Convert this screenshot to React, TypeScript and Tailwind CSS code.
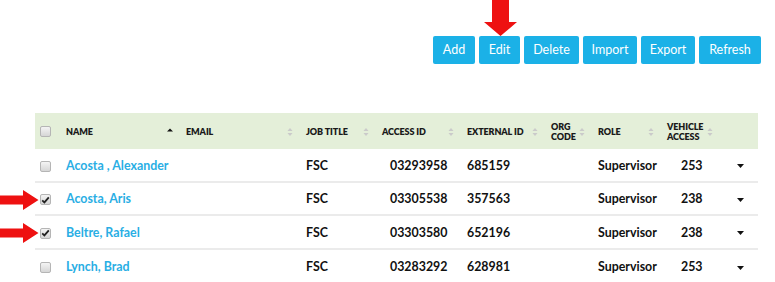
import React from "react";

const cols = "grid grid-cols-[25px_120px_120px_76px_85px_84px_47px_69px_59px_38px]";

const buttons = [
  { label: "Add", w: "w-[42px]" },
  { label: "Edit", w: "w-[41px]" },
  { label: "Delete", w: "w-[55px]" },
  { label: "Import", w: "w-[54px]" },
  { label: "Export", w: "w-[54px]" },
  { label: "Refresh", w: "w-[62px]" },
];

const rows = [
  { name: "Acosta , Alexander", title: "FSC", access: "03293958", ext: "685159", role: "Supervisor", veh: "253", checked: false, h: "h-[34px]" },
  { name: "Acosta, Aris", title: "FSC", access: "03305538", ext: "357563", role: "Supervisor", veh: "238", checked: true, h: "h-[33px]" },
  { name: "Beltre, Rafael", title: "FSC", access: "03303580", ext: "652196", role: "Supervisor", veh: "238", checked: true, h: "h-[34px]" },
  { name: "Lynch, Brad", title: "FSC", access: "03283292", ext: "628981", role: "Supervisor", veh: "253", checked: false, h: "h-[33px]" },
];

function Checkbox({ checked }: { checked?: boolean }) {
  return (
    <span className="relative flex h-[11px] w-[11px] items-center justify-center rounded-[2px] border border-[#b5b5b5] bg-gradient-to-b from-[#f4f4f4] to-[#d6d6d6]">
      {checked && (
        <svg width="9" height="8" viewBox="0 0 9 8" className="absolute">
          <path d="M1.2 4.3 L3.4 6.4 L7.8 1.3" fill="none" stroke="#222" strokeWidth="1.8" />
        </svg>
      )}
    </span>
  );
}

function SortIcon() {
  return (
    <svg width="6" height="10" viewBox="0 0 6 10" className="shrink-0">
      <path d="M0.5 4 L3 1 L5.5 4 Z" fill="#cacaca" />
      <path d="M0.5 6 L3 9 L5.5 6 Z" fill="#cacaca" />
    </svg>
  );
}

function Head({ children, sort = "both" }: { children: React.ReactNode; sort?: "both" | "asc" | "none" }) {
  return (
    <div className="flex items-center justify-between pl-[6px] pr-[7px] pt-[1px] text-[9px] font-extrabold uppercase leading-[9.5px] tracking-[-0.1px] text-[#1a1a1a]">
      <span>{children}</span>
      {sort === "both" && <SortIcon />}
      {sort === "asc" && (
        <svg width="6" height="4" viewBox="0 0 6 4" className="mb-[4px] shrink-0">
          <path d="M0 3.5 L3 0.5 L6 3.5 Z" fill="#111" />
        </svg>
      )}
    </div>
  );
}

function RightArrow({ top }: { top: string }) {
  return (
    <svg width="39" height="20" viewBox="0 0 39 20" className={`absolute left-0 ${top}`}>
      <path d="M0 5.5 H23 V0 L38.5 10 L23 20 V14.5 H0 Z" fill="#ee1111" />
    </svg>
  );
}

export default function App() {
  return (
    <div className="relative h-[282px] w-[775px] overflow-hidden bg-white font-['Lato',sans-serif]">
      {/* toolbar */}
      <div className="flex justify-end gap-[4px] pr-[14px] pt-[36px]">
        {buttons.map((b) => (
          <button
            key={b.label}
            className={`h-[28px] ${b.w} rounded-[2px] bg-[#1bb1e7] text-center text-[12.5px] leading-none text-white`}
          >
            {b.label}
          </button>
        ))}
      </div>

      {/* table */}
      <div className="ml-[35px] mt-[49px] w-[723px]">
        <div className={`${cols} h-[36px] items-center bg-[#e4efd9]`}>
          <div className="flex items-center pl-[5px]">
            <Checkbox />
          </div>
          <Head sort="asc">Name</Head>
          <Head>Email</Head>
          <Head>Job Title</Head>
          <Head>Access ID</Head>
          <Head>External ID</Head>
          <Head>
            Org
            <br />
            Code
          </Head>
          <Head>Role</Head>
          <Head>
            Vehicle
            <br />
            Access
          </Head>
          <div />
        </div>
        {rows.map((r, i) => (
          <div
            key={r.name}
            className={`${cols} ${r.h} items-center pt-[2px] ${i < rows.length - 1 ? "border-b-2 border-[#ebebeb]" : ""} text-[12.4px] font-bold text-[#111]`}
          >
            <div className="flex items-center pl-[5px]">
              <Checkbox checked={r.checked} />
            </div>
            <div className="pl-[6px] text-[#29aee4]">{r.name}</div>
            <div />
            <div className="pl-[6px]">{r.title}</div>
            <div className="pl-[14px]">{r.access}</div>
            <div className="pl-[6px]">{r.ext}</div>
            <div />
            <div className="pl-[6px]">{r.role}</div>
            <div className="pl-[20px]">{r.veh}</div>
            <div className="flex justify-center pl-[3px]">
              <svg width="7" height="4" viewBox="0 0 7 4">
                <path d="M0 0 H7 L3.5 4 Z" fill="#111" />
              </svg>
            </div>
          </div>
        ))}
      </div>

      {/* annotation arrows */}
      <svg width="34" height="36" viewBox="0 0 34 36" className="absolute left-[484px] top-0">
        <path d="M8 0 H25 V22 H33 L16.5 36 L0 22 H8 Z" fill="#ee1111" />
      </svg>
      <RightArrow top="top-[190px]" />
      <RightArrow top="top-[223px]" />
    </div>
  );
}
